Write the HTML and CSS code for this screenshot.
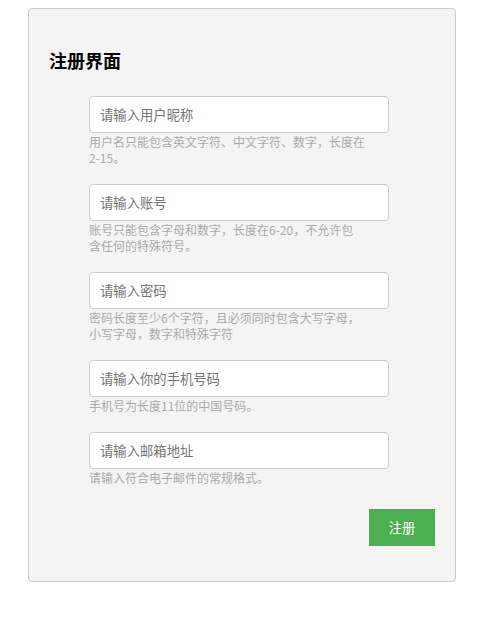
FILE: index.html
```html
<!DOCTYPE html>
<html lang="zh-CN">
<head>
<meta charset="utf-8">
<title>注册界面</title>
<link rel="stylesheet" href="styles.css">
</head>
<body>
<div class="card">
  <h3 class="title">注册界面</h3>
  <form class="form">
    <div class="group">
      <input class="field" type="text" placeholder="请输入用户昵称">
      <p class="hint">用户名只能包含英文字符、中文字符、数字，长度在<br>2-15。</p>
    </div>
    <div class="group">
      <input class="field" type="text" placeholder="请输入账号">
      <p class="hint">账号只能包含字母和数字，长度在6-20，不允许包<br>含任何的特殊符号。</p>
    </div>
    <div class="group">
      <input class="field" type="password" placeholder="请输入密码">
      <p class="hint">密码长度至少6个字符，且必须同时包含大写字母，<br>小写字母，数字和特殊字符</p>
    </div>
    <div class="group">
      <input class="field" type="text" placeholder="请输入你的手机号码">
      <p class="hint">手机号为长度11位的中国号码。</p>
    </div>
    <div class="group">
      <input class="field" type="text" placeholder="请输入邮箱地址">
      <p class="hint">请输入符合电子邮件的常规格式。</p>
    </div>
    <div class="actions">
      <button class="submit" type="button">注册</button>
    </div>
  </form>
</div>
</body>
</html>
```

FILE: styles.css
```css
html, body {
  margin: 0;
  padding: 0;
  background: #ffffff;
  font-family: "Noto Sans CJK SC", "Noto Sans", sans-serif;
}

.card {
  box-sizing: border-box;
  width: 428px;
  height: 574px;
  margin: 8px 0 0 28px;
  padding: 20px 20px 20px 20px;
  background: #f4f4f4;
  border: 1px solid #cccccc;
  border-radius: 4px;
}

.title {
  margin: 18px 0 0 0;
  font-size: 18px;
  line-height: 26px;
  font-weight: bold;
  color: #000000;
}

.form {
  display: flex;
  flex-direction: column;
  margin: 23px 0 0 40px;
}

.group {
  display: flex;
  flex-direction: column;
  width: 300px;
  margin-bottom: 18px;
}

.field {
  box-sizing: border-box;
  width: 300px;
  height: 37px;
  margin: 0;
  padding: 0 10px;
  background: #ffffff;
  border: 1px solid #cccccc;
  border-radius: 4px;
  font-family: "Noto Sans CJK SC", "Noto Sans", sans-serif;
  font-size: 13.333px;
  color: #333333;
  outline: none;
}

.field::placeholder {
  color: #757575;
}

.hint {
  margin: 1px 0 0 0;
  font-size: 12px;
  line-height: 16px;
  color: #aaaaaa;
  white-space: nowrap;
}

.actions {
  display: flex;
  justify-content: flex-end;
  margin-top: 5px;
}

.submit {
  width: 66px;
  height: 37px;
  padding: 0;
  border: none;
  border-radius: 0;
  background: #4caf50;
  color: #ffffff;
  font-family: "Noto Sans CJK SC", "Noto Sans", sans-serif;
  font-size: 13.333px;
  cursor: pointer;
}
```
